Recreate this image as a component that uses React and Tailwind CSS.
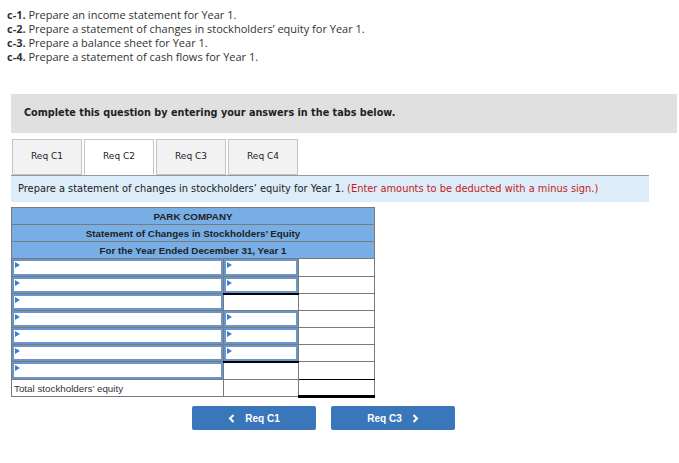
import React from "react";

/* ---------- Helpers ---------- */
const Marker = () => (
  <span className="absolute left-[1px] top-[1px] w-0 h-0 border-t-[3px] border-b-[3px] border-l-[5px] border-t-transparent border-b-transparent border-l-[#3f7fc8]" />
);

const InputCell = () => (
  <div className="relative h-full w-full border-2 border-[#6a94cc] bg-white">
    <Marker />
  </div>
);

const steps = [
  ["c-1.", "Prepare an income statement for Year 1."],
  ["c-2.", "Prepare a statement of changes in stockholders’ equity for Year 1."],
  ["c-3.", "Prepare a balance sheet for Year 1."],
  ["c-4.", "Prepare a statement of cash flows for Year 1."],
];

// [col1 input, col2 input, col2 underline, col3 underline, tall row]
const rows = [
  [true, true, false, false, true],
  [true, true, true, false, false],
  [true, false, false, false, false],
  [true, true, false, false, false],
  [true, true, false, false, false],
  [true, true, true, false, false],
  [true, false, false, true, true],
];

const Tab = ({ label, active }) => (
  <div
    className={`w-[70px] h-[36px] flex items-center justify-center border border-[#c4c4c4] text-[9px] text-[#222] ${
      active ? "bg-white border-b-white -mb-px relative z-10" : "bg-[#f2f2f2]"
    }`}
  >
    {label}
  </div>
);

export default function App() {
  return (
    <div className="w-[679px] h-[463px] bg-white overflow-hidden">
      {/* Task list */}
      <div
        className="pl-[7px] pt-[8px] text-[11px] leading-[14px] text-[#333]"
        style={{ fontFamily: "'Open Sans', Lato, sans-serif" }}
      >
        {steps.map(([k, t]) => (
          <div key={k}>
            <span className="font-bold">{k}</span> {t}
          </div>
        ))}
      </div>

      <div className="pl-[11px] pt-[30px]" style={{ fontFamily: "'DejaVu Sans', Verdana, sans-serif" }}>
        <div className="w-[666px] h-[39px] bg-[#e0e0e0] flex items-center pl-[13px] text-[9.7px] font-bold text-[#222]">
          Complete this question by entering your answers in the tabs below.
        </div>

        {/* Tabs */}
        <div className="mt-[6px] w-[638px] flex gap-[2px] pl-px border-b border-[#9a9a9a]">
          <Tab label="Req C1" />
          <Tab label="Req C2" active />
          <Tab label="Req C3" />
          <Tab label="Req C4" />
        </div>

        <div className="w-[638px] h-[26px] bg-[#dcecf9] flex items-center pl-[7px] text-[9.85px] text-[#222]">
          Prepare a statement of changes in stockholders’ equity for Year 1.
          <span className="text-[#c41a1a] ml-[3px]">(Enter amounts to be deducted with a minus sign.)</span>
        </div>

        {/* Statement */}
        <table
          className="mt-[5px] w-[363px] border-collapse table-fixed text-[9.8px] text-[#222]"
          style={{ fontFamily: "'Liberation Sans', Arial, sans-serif" }}
        >
          <colgroup>
            <col className="w-[212px]" />
            <col className="w-[75px]" />
            <col className="w-[76px]" />
          </colgroup>
          <tbody>
            {["PARK COMPANY", "Statement of Changes in Stockholders’ Equity", "For the Year Ended December 31, Year 1"].map(
              (h) => (
                <tr key={h} className="h-[17px]">
                  <td colSpan={3} className="bg-[#78aee6] border border-[#7a7a7a] text-center font-bold p-0 leading-[15px]">
                    {h}
                  </td>
                </tr>
              )
            )}
            {rows.map(([a, b, line, l3, tall], i) => {
              const h = tall ? "h-[18px]" : "h-[17px]";
              return (
                <tr key={i}>
                  <td className={`border border-[#7a7a7a] p-0 ${h}`}>{a && <InputCell />}</td>
                  <td className={`border border-[#7a7a7a] p-0 ${h} ${line ? "border-b-black border-b-2" : ""}`}>
                    {b && <InputCell />}
                  </td>
                  <td className={`border border-[#7a7a7a] p-0 ${h} ${l3 ? "border-b-black" : ""}`} />
                </tr>
              );
            })}
            <tr className="h-[17px]">
              <td className="border border-[#7a7a7a] px-[2px] py-0 text-[#333] font-normal leading-[15px]">
                Total stockholders’ equity
              </td>
              <td className="border border-[#7a7a7a] p-0" />
              <td className="border border-[#7a7a7a] border-b-[3px] border-b-black p-0" />
            </tr>
          </tbody>
        </table>

        {/* Nav buttons */}
        <div className="mt-[8px] ml-[181px] flex gap-[15px]" style={{ fontFamily: "'Liberation Sans', Arial, sans-serif" }}>
          <button className="w-[124px] h-[24px] rounded-[2px] bg-[#3a76ba] text-white text-[10px] font-bold flex items-center justify-center gap-[10px]">
            <svg width="7" height="9" viewBox="0 0 7 9">
              <path d="M5.5 1 L2 4.5 L5.5 8" fill="none" stroke="white" strokeWidth="2" />
            </svg>
            Req C1
          </button>
          <button className="w-[124px] h-[24px] rounded-[2px] bg-[#3a76ba] text-white text-[10px] font-bold flex items-center justify-center gap-[10px]">
            Req C3
            <svg width="7" height="9" viewBox="0 0 7 9">
              <path d="M1.5 1 L5 4.5 L1.5 8" fill="none" stroke="white" strokeWidth="2" />
            </svg>
          </button>
        </div>
      </div>
    </div>
  );
}
